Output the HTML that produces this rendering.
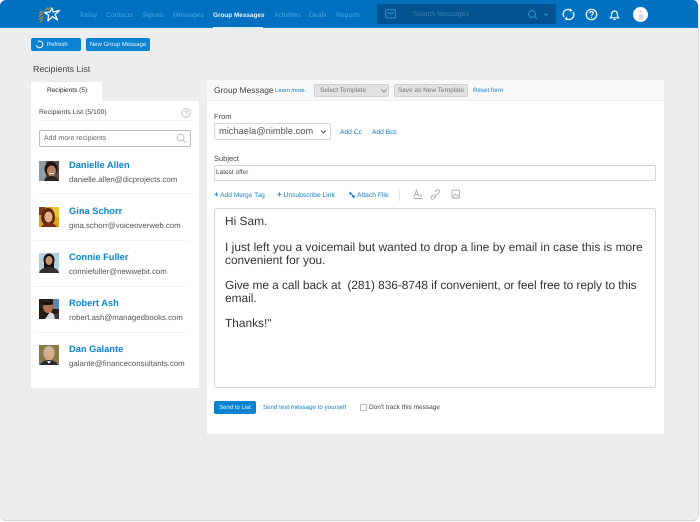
<!DOCTYPE html>
<html><head><meta charset="utf-8"><style>
html,body{margin:0;padding:0;background:#fff}
#p{position:relative;width:700px;height:522px;overflow:hidden;background:#fff;font-family:"Liberation Sans",sans-serif;text-rendering:geometricPrecision}
#f{position:absolute;left:0;top:0;width:699px;height:521px;background:#ededed;border-radius:6px;border-right:1px solid #ddd;border-bottom:1px solid #d4d4d4;box-sizing:border-box;overflow:hidden;filter:blur(.25px)}
.a{position:absolute;white-space:nowrap}
.n{top:9.500px;font-size:6.800px;line-height:11px;color:#4aa6de;height:11px}
.b{background:#0a84d2;border-radius:2px;color:#e8f4fc;font-size:6px;line-height:14px;height:13px;text-align:center}
.l{color:#1a7fc4;font-size:6.700px;line-height:10px}
.g{color:#444;font-size:7px;line-height:10px}
.nm{left:69px;color:#0a84d2;font-size:9.300px;font-weight:bold;line-height:13px}
.em{left:69px;color:#555;font-size:7.850px;line-height:11px}
.sep{left:37px;width:156px;height:1px;background:#f4f4f4}
.av{left:39px;width:20px;height:20px}
.m{left:225px;font-size:11.900px;line-height:12.700px;color:#333}
</style></head><body><div id="p"><div id="f">
<div class="a" style="left:0;top:0;width:699px;height:28px;background:#0170c1;border-bottom:1px solid #0a86d4;box-sizing:border-box"></div>
<svg class="a" style="left:37px;top:5px" width="26" height="19" viewBox="0 0 26 19" fill="none"><path d="M2 8.500l4-2.500M1.500 11.500l4.500-3M2 14.500l4-3M3 17l3-3.500M8 5.500l3-3M11 5l2.500-3" stroke="#c68c32" stroke-width="1.100"/><path d="M15 3l1.200 4 6.300-1.500-4.500 4 2.500 5.500-5-3.500-4.500 4.500.5-6-4-2.500 5.500-.5z" stroke="#fff" stroke-width="1.300" stroke-linejoin="round"/></svg>
<div class="a n" style="left:79px">Today</div>
<div class="a n" style="left:106px">Contacts</div>
<div class="a n" style="left:142px">Signals</div>
<div class="a n" style="left:173px">Messages</div>
<div class="a n" style="left:213px;color:#e6f4fd;font-weight:bold;font-size:6.400px">Group Messages</div>
<div class="a" style="left:213px;top:27px;width:50px;height:2px;background:#dbeef9"></div>
<div class="a n" style="left:274px">Activities</div>
<div class="a n" style="left:309px">Deals</div>
<div class="a n" style="left:336px">Reports</div>
<div class="a" style="left:377px;top:4px;width:179px;height:20px;background:#02538f;border-radius:1px"></div>
<svg class="a" style="left:385px;top:9px" width="11" height="10" viewBox="0 0 11 10" fill="none"><rect x=".7" y=".7" width="9.600" height="8.200" rx="1.200" stroke="#1f93cb" stroke-width="1.100"/><path d="M2.500 3l3 2.200L8.500 3" stroke="#1f93cb" stroke-width="1.100"/></svg>
<div class="a" style="left:413px;top:9px;font-size:7px;line-height:11px;color:#3d7fb0">Search Messages</div>
<svg class="a" style="left:526px;top:9px" width="24" height="11" viewBox="0 0 24 11" fill="none"><circle cx="6" cy="5" r="3.400" stroke="#1f93cb" stroke-width="1.100"/><path d="M8.500 7.500L11 10M18 4.500l2 2 2-2" stroke="#1f93cb" stroke-width="1.100"/></svg>
<svg class="a" style="left:562px;top:8px" width="13" height="13" viewBox="0 0 13 13" fill="none"><path d="M2 9A4.800 4.800 0 0 1 8.500 2.200M11 4A4.800 4.800 0 0 1 4.500 10.800" stroke="#fff" stroke-width="1.300"/><path d="M8 .5l2.500 2-2.500 1.500zM5 12.500l-2.500-2L5 9z" fill="#fff"/></svg>
<svg class="a" style="left:585px;top:8px" width="13" height="13" viewBox="0 0 13 13" fill="none"><circle cx="6.500" cy="6.500" r="5.200" stroke="#fff" stroke-width="1.200"/><path d="M4.800 5.200C4.800 3 8.200 3 8.200 5.200 8.200 6.500 6.500 6.300 6.500 7.800" stroke="#fff" stroke-width="1.100"/><circle cx="6.500" cy="9.500" r=".7" fill="#fff"/></svg>
<svg class="a" style="left:608px;top:8px" width="13" height="13" viewBox="0 0 13 13" fill="none"><path d="M2.500 9.800c1-1 1.200-2 1.200-4a2.800 2.800 0 0 1 5.600 0c0 2 .2 3 1.200 4z" stroke="#fff" stroke-width="1.200"/><path d="M5.500 11.500h2" stroke="#fff" stroke-width="1.300"/></svg>
<div class="a" style="left:633px;top:7px;width:15px;height:15px;border-radius:50%;background:#fff"></div>
<div class="a" style="left:639px;top:10px;width:3px;height:3px;border-radius:50%;background:#ddd"></div>
<div class="a" style="left:638.500px;top:14px;width:4px;height:6px;border-radius:1px;background:#ddd"></div>

<div class="a b" style="left:31px;top:38px;width:50px;padding-left:2.500px;box-sizing:border-box">Refresh</div>
<svg class="a" style="left:35px;top:40px" width="9" height="9" viewBox="0 0 9 9" fill="none"><path d="M3 1.500A3.300 3.300 0 1 1 1.300 5" stroke="#fff" stroke-width="1"/></svg>
<div class="a b" style="left:86px;top:38px;width:64px">New Group Message</div>
<div class="a" style="left:33px;top:63px;font-size:8.800px;line-height:12px;color:#444">Recipients List</div>

<div class="a" style="left:31px;top:82px;width:71px;height:20px;background:#fff;border-radius:2px 2px 0 0"></div>
<div class="a" style="left:31px;top:101px;width:168px;height:287px;background:#fff;border-radius:1px"></div>
<div class="a" style="left:47px;top:86px;font-size:6.500px;line-height:10px;color:#333"><b style="font-weight:normal;color:#222">Recipients</b> (5)</div>
<div class="a" style="left:39px;top:108px;font-size:6.800px;line-height:10px;color:#444">Recipients List (5/100)</div>
<svg class="a" style="left:181px;top:108px" width="10" height="10" viewBox="0 0 10 10" fill="none"><circle cx="5" cy="5" r="4.300" stroke="#bbb" stroke-width=".9"/><path d="M3.700 4c0-1.700 2.600-1.700 2.600 0 0 1-1.300 1-1.300 2" stroke="#bbb" stroke-width=".8"/><circle cx="5" cy="7.400" r=".5" fill="#bbb"/></svg>
<div class="a sep" style="top:120px"></div>
<div class="a" style="left:39px;top:130px;width:152px;height:17px;border:1px solid #bbb;border-radius:2px;box-sizing:border-box;background:#fff"></div>
<div class="a" style="left:44px;top:133.500px;font-size:7px;line-height:10px;color:#666">Add more recipients</div>
<svg class="a" style="left:176px;top:133px" width="11" height="11" viewBox="0 0 11 11" fill="none"><circle cx="4.500" cy="4.500" r="3.400" stroke="#c4c4c4" stroke-width="1"/><path d="M7 7l3 3" stroke="#c4c4c4" stroke-width="1"/></svg>

<svg class="a av" style="top:161px" viewBox="0 0 20 20"><rect width="20" height="20" fill="#5b5148"/><rect width="7" height="20" fill="#8f9ba6"/><ellipse cx="12" cy="8" rx="6.500" ry="7.500" fill="#1f1410"/><ellipse cx="12.500" cy="10" rx="4.500" ry="5.500" fill="#b7805f"/><path d="M10 12.500h5" stroke="#eee"/><path d="M5 20c1-4 4-5 7-5s6 1 8 5z" fill="#2b2320"/></svg>
<div class="a nm" style="top:159px">Danielle Allen</div>
<div class="a em" style="top:174px">danielle.allen@dicprojects.com</div>
<div class="a sep" style="top:193px"></div>

<svg class="a av" style="top:207px" viewBox="0 0 20 20"><rect width="20" height="20" fill="#d9a520"/><path d="M0 0h6v8H0z" fill="#7c3a16"/><path d="M14 0h6v10h-6z" fill="#e8c43a"/><ellipse cx="9" cy="10" rx="7" ry="9" fill="#5e2a14"/><ellipse cx="9.500" cy="10" rx="4" ry="5.500" fill="#e7b08d"/><path d="M2 20c2-3 5-4 8-4s6 1 8 4z" fill="#7d2c1a"/></svg>
<div class="a nm" style="top:205px">Gina Schorr</div>
<div class="a em" style="top:220px">gina.schorr@voiceoverweb.com</div>
<div class="a sep" style="top:240px;left:33px"></div>

<svg class="a av" style="top:253px" viewBox="0 0 20 20"><rect width="20" height="20" fill="#b6cfdf"/><ellipse cx="10" cy="7" rx="5.500" ry="6.500" fill="#1a1210"/><path d="M5 8h10v7H5z" fill="#1a1210"/><ellipse cx="10" cy="7.500" rx="3.500" ry="4.500" fill="#c59272"/><path d="M0 20c1-4 5-6 10-6s9 2 10 6z" fill="#33302f"/></svg>
<div class="a nm" style="top:251px">Connie Fuller</div>
<div class="a em" style="top:266px">conniefuller@newwebit.com</div>
<div class="a sep" style="top:286px;left:33px"></div>

<svg class="a av" style="top:299px" viewBox="0 0 20 20"><rect width="20" height="20" fill="#241c18"/><path d="M14 0h6v10h-6z" fill="#5b8ab0"/><ellipse cx="9" cy="8" rx="5" ry="6" fill="#b0714e"/><path d="M4 5c1-3 8-4 10-1l-2 2-7 0z" fill="#181210"/><path d="M6 20l5-7 4 2 1 5z" fill="#d8d8d8"/><path d="M15 15l5-1v6h-4z" fill="#3a3a3a"/></svg>
<div class="a nm" style="top:297px">Robert Ash</div>
<div class="a em" style="top:312px">robert.ash@managedbooks.com</div>
<div class="a sep" style="top:332px;left:33px"></div>

<svg class="a av" style="top:345px" viewBox="0 0 20 20"><rect width="20" height="20" fill="#8a7a48"/><ellipse cx="10" cy="8" rx="5.500" ry="7" fill="#cdb79c"/><ellipse cx="10" cy="10" rx="4.500" ry="5.500" fill="#d9ab8e"/><path d="M1 20c1-3 5-5 9-5s8 2 9 5z" fill="#232a35"/><path d="M8 16l2 3 2-3z" fill="#eee"/></svg>
<div class="a nm" style="top:343px">Dan Galante</div>
<div class="a em" style="top:358px">galante@financeconsultants.com</div>

<div class="a" style="left:207px;top:80px;width:457px;height:354px;background:#fff;border-radius:1px"></div>
<div class="a" style="left:207px;top:80px;width:457px;height:21px;background:#f8f8f8;border-bottom:1px solid #eee;box-sizing:border-box"></div>
<div class="a" style="left:214px;top:84px;font-size:8.400px;line-height:12px;color:#444">Group Message</div>
<div class="a l" style="left:275px;top:86px;font-size:5.800px">Learn more.</div>
<div class="a" style="left:314px;top:84px;width:75px;height:13px;background:#e2e2e2;border:1px solid #d0d0d0;border-radius:2px;box-sizing:border-box"></div>
<div class="a" style="left:320px;top:85.500px;font-size:6.500px;line-height:10px;color:#777">Select Template</div>
<svg class="a" style="left:381px;top:89px" width="6" height="4" viewBox="0 0 6 4" fill="none"><path d="M.5.500l2.500 2.500 2.500-2.500" stroke="#888"/></svg>
<div class="a" style="left:394px;top:84px;width:74px;height:13px;background:#e2e2e2;border:1px solid #d0d0d0;border-radius:2px;box-sizing:border-box;text-align:center;font-size:6.500px;line-height:11px;color:#777">Save as New Template</div>
<div class="a l" style="left:473px;top:86px;font-size:6.200px">Reset form</div>

<div class="a" style="left:214px;top:112px;font-size:7.500px;line-height:10px;color:#444">From</div>
<div class="a" style="left:214px;top:123px;width:117px;height:17px;background:#fff;border:1px solid #d6d6d6;border-radius:2px;box-sizing:border-box"></div>
<div class="a" style="left:219px;top:125px;font-size:9.300px;line-height:12px;color:#555">michaela@nimble.com</div>
<svg class="a" style="left:320px;top:130px" width="7" height="4" viewBox="0 0 7 4" fill="none"><path d="M1 .5l2.500 2.500L6 .5" stroke="#555"/></svg>
<div class="a l" style="left:340px;top:127.500px">Add Cc</div>
<div class="a l" style="left:372px;top:127.500px">Add Bcc</div>
<div class="a" style="left:214px;top:153.500px;font-size:7.500px;line-height:10px;color:#444">Subject</div>
<div class="a" style="left:214px;top:165px;width:442px;height:16px;background:#fff;border:1px solid #d6d6d6;border-radius:2px;box-sizing:border-box"></div>
<div class="a" style="left:216px;top:168px;font-size:6.500px;line-height:10px;color:#444">Latest offer</div>

<div class="a l" style="left:214px;top:190px;font-size:6.600px"><span style="font-weight:bold;font-size:8px">+</span> Add Merge Tag</div>
<div class="a l" style="left:277px;top:190px;font-size:6.700px"><span style="font-weight:bold;font-size:8px">+</span> Unsubscribe Link</div>
<svg class="a" style="left:348px;top:191px" width="8" height="8" viewBox="0 0 8 8" fill="none"><path d="M1.500 1.500l2 2M4 4l2.500 2.500" stroke="#1a7fc4" stroke-width="2"/></svg>
<div class="a l" style="left:357px;top:190.500px;font-size:6.700px">Attach File</div>
<div class="a" style="left:399px;top:189px;width:1px;height:12px;background:#e4e4e4"></div>
<svg class="a" style="left:413px;top:189px" width="47" height="11" viewBox="0 0 47 11" fill="none"><path d="M1 8l2.500-7L6 8M2 5.500h3M.5 9.500h9M8 5v3" stroke="#aaa" stroke-width=".9"/><path d="M20.500 5.500l-2 2a1.600 1.600 0 0 0 2.300 2.300l2-2M24 5.500l2-2a1.600 1.600 0 0 0-2.300-2.300l-2 2M21 8l3-3" stroke="#aaa" stroke-width=".9"/><rect x="39" y="1" width="7.500" height="8" rx="1" stroke="#aaa" stroke-width=".9"/><path d="M40 8l2-3 1.500 1.500 1-1 1.500 2" stroke="#aaa" stroke-width=".8"/></svg>

<div class="a" style="left:214px;top:208px;width:442px;height:180px;background:#fff;border:1px solid #d8d8d8;border-radius:2px;box-sizing:border-box"></div>
<div class="a m" style="top:215px">Hi Sam.</div>
<div class="a m" style="top:241px;letter-spacing:.025px">I just left you a voicemail but wanted to drop a line by email in case this is more</div>
<div class="a m" style="top:254px">convenient for you.</div>
<div class="a m" style="top:279px;letter-spacing:-.05px">Give me a call back at &nbsp;(281) 836-8748 if convenient, or feel free to reply to this</div>
<div class="a m" style="top:292px">email.</div>
<div class="a m" style="top:316.500px">Thanks!"</div>

<div class="a b" style="left:214px;top:401px;width:42px;color:#eaf5fc">Send to List</div>
<div class="a l" style="left:263px;top:403px;font-size:6.200px">Send test message to yourself</div>
<div class="a" style="left:360px;top:404px;width:5px;height:5px;border:1px solid #bbb;border-radius:1px;background:#fff"></div>
<div class="a" style="left:369px;top:403px;font-size:6.500px;line-height:10px;color:#444">Don't track this message</div>
</div></div></body></html>
